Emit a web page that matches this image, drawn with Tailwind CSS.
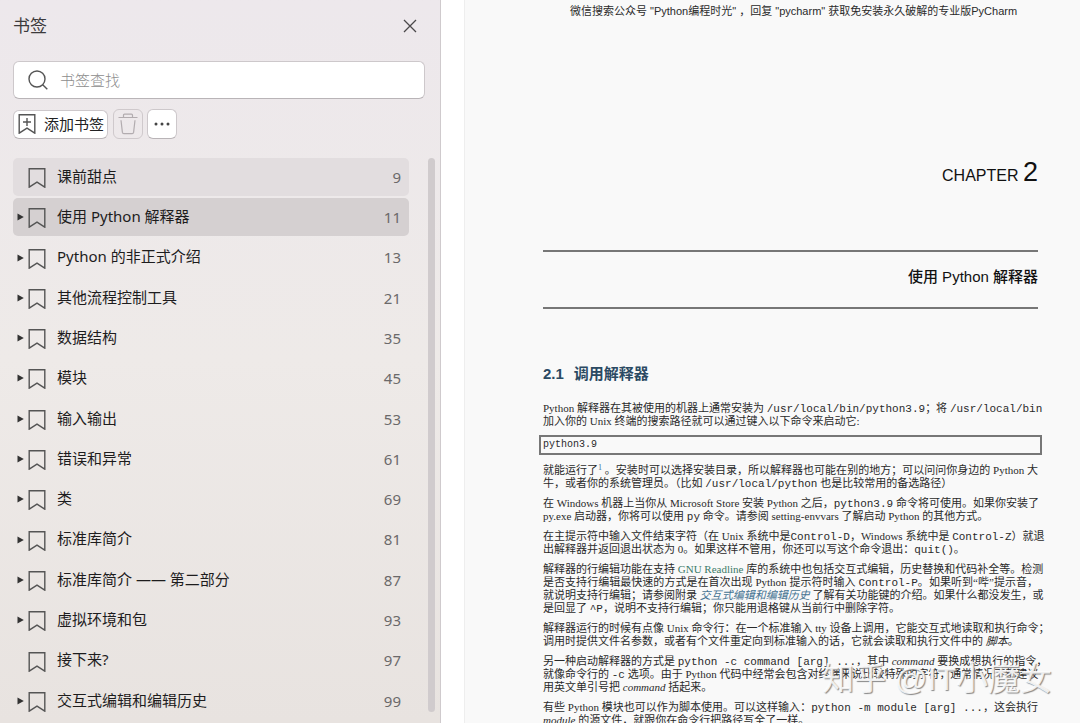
<!DOCTYPE html>
<html lang="zh-CN">

<head>
  <meta charset="UTF-8">
  <meta name="viewport" content="width=device-width, initial-scale=1">
  <title>使用 Python 解释器</title>
  <script src="https://cdn.jsdelivr.net/npm/@tailwindcss/browser@4"></script>
</head>

<body class="flex h-screen overflow-hidden bg-white font-['Noto_Sans','Noto_Sans_CJK_SC',sans-serif]">
  <!-- Bookmark panel -->
  <aside class="flex w-[441px] shrink-0 flex-col border-r border-[#cfcacd] bg-linear-to-b from-[#ede8ec] via-[#eeeae8] to-[#e8e3e0] pt-3 pb-[3px]">
    <header class="flex h-7 items-center justify-between pr-5 pl-[13px]">
      <h2 class="text-[17px] text-[#3c3a3c]">书签</h2>
      <button type="button" aria-label="关闭" class="grid size-5 place-items-center text-[#4a484a]">
        <svg class="size-4" viewBox="0 0 16 16" fill="none" stroke="currentColor" stroke-width="1.3"><path d="M2 2l12 12M14 2L2 14" /></svg>
      </button>
    </header>

    <label class="mt-[21px] mr-[15px] ml-[13px] flex h-[38px] items-center gap-3 rounded-md border border-[#cdc8cb] border-b-[#b9b4b7] bg-white pl-3.5">
      <svg class="size-5 shrink-0 text-[#555]" viewBox="0 0 20 20" fill="none" stroke="currentColor" stroke-width="1.4"><circle cx="9" cy="9" r="8" /><path d="M14.7 14.7l4.6 4.6" /></svg>
      <input type="text" aria-label="书签查找" placeholder="书签查找" class="min-w-0 flex-1 bg-transparent text-[15px] font-light outline-none placeholder:text-[#8d8d8d]">
    </label>

    <div class="mt-2.5 ml-[13px] flex h-[30px] items-center gap-1">
      <button type="button" class="mr-px flex h-[29px] items-center gap-2 rounded-md border border-[#cdc8cb] border-b-[#b9b4b7] bg-white pr-[3px] pl-1 text-[15px] text-[#222]">
        <svg class="h-5 w-[18px] text-[#555]" viewBox="0 0 18 20" fill="none" stroke="currentColor" stroke-width="1.4"><path d="M1.2.8h15.6v18.4L9 14.2l-7.8 5zM9 4v8M5 8h8" /></svg>
        添加书签
      </button>
      <button type="button" aria-label="删除" class="grid h-[30px] w-[30px] place-items-center rounded-md border border-[#cfc9cc] text-[#b2acaf]">
        <svg class="h-[22px] w-5" viewBox="0 0 20 22" fill="none" stroke="currentColor" stroke-width="1.2"><path d="M.5 4.5h19M5.5 4.5V2.2q0-1 1-1h7q1 0 1 1v2.3M3 7.2l1.4 12.2q.2 1.2 1.4 1.2h8.4q1.2 0 1.4-1.2L17 7.2" /></svg>
      </button>
      <button type="button" aria-label="更多" class="grid h-[30px] w-[30px] place-items-center rounded-md border border-[#cdc8cb] border-b-[#b9b4b7] bg-white text-[#444]">
        <svg class="h-1 w-4" viewBox="0 0 16 4" fill="currentColor"><circle cx="2" cy="2" r="1.5" /><circle cx="8" cy="2" r="1.5" /><circle cx="14" cy="2" r="1.5" /></svg>
      </button>
    </div>

    <div class="mt-[19px] flex min-h-0 flex-1 justify-between pr-[5px] pl-[13px]">
      <ul id="bookmarks" class="mr-[19px] flex flex-1 flex-col justify-between"></ul>
      <div class="mb-2 w-[7px] rounded-full bg-[#d0cbcd]"></div>
    </div>
  </aside>

  <!-- Page -->
  <main class="relative ml-[23px] min-w-0 flex-1 border-l border-[#eeeeee] bg-[#f9f9f9] pr-[42px] pl-[78px] text-[#2a2a2a]">
    <p class="pt-1 pl-[27px] font-['Liberation_Sans','Noto_Sans_CJK_SC',sans-serif] text-[11px] leading-[14px] whitespace-nowrap">微信搜索公众号 "Python编程时光" ，回复 "pycharm" 获取免安装永久破解的专业版PyCharm</p>

    <div class="mt-[136px] text-right font-['Liberation_Sans','Noto_Sans_CJK_SC',sans-serif] text-[#111]">
      <p class="text-base leading-9">CHAPTER <span class="text-[27px] leading-9">2</span></p>
      <h1 class="mt-[56px] flex h-[59px] items-center justify-end border-y-2 border-[#777] pb-1 text-[15px] font-medium whitespace-pre">使用 Python 解释器</h1>
    </div>

    <h2 class="mt-[53px] font-['Liberation_Sans','Noto_Sans_CJK_SC',sans-serif] text-[15px] leading-6 font-bold text-[#2b4a63]">2.1<span class="ml-2.5">调用解释器</span></h2>

    <div class="mt-4 flex flex-col gap-[7px] font-['Liberation_Serif','Noto_Sans_CJK_SC',serif] text-[11px] leading-[13px] whitespace-nowrap [&_code]:font-['Liberation_Mono',monospace] [&_code]:text-[11px] [&_code]:leading-none [&_p>span]:block [&_p>span:not(:last-child)]:[text-align-last:justify]">
      <p>
        <span>Python 解释器在其被使用的机器上通常安装为 <code>/usr/local/bin/python3.9</code>；将 <code>/usr/local/bin</code></span>
        <span>加入你的 Unix 终端的搜索路径就可以通过键入以下命令来启动它:</span>
      </p>
      <pre class="-mx-1 mb-0.5 h-5 border-2 border-[#777] pl-0.5 font-['Liberation_Mono',monospace] text-[10px] leading-4">python3.9</pre>
      <p>
        <span>就能运行了<sup class="text-[8px] leading-none text-[#3f6f96]">1</sup> 。安装时可以选择安装目录，所以解释器也可能在别的地方；可以问问你身边的 Python 大</span>
        <span>牛，或者你的系统管理员。（比如 <code>/usr/local/python</code> 也是比较常用的备选路径）</span>
      </p>
      <p>
        <span>在 Windows 机器上当你从 Microsoft Store 安装 Python 之后，<code>python3.9</code> 命令将可使用。如果你安装了</span>
        <span>py.exe 启动器，你将可以使用 <code>py</code> 命令。请参阅 setting-envvars 了解启动 Python 的其他方式。</span>
      </p>
      <p>
        <span>在主提示符中输入文件结束字符（在 Unix 系统中是<code>Control-D</code>，Windows 系统中是 <code>Control-Z</code>）就退</span>
        <span>出解释器并返回退出状态为 0。如果这样不管用，你还可以写这个命令退出：<code>quit()</code>。</span>
      </p>
      <p>
        <span>解释器的行编辑功能在支持 <a href="#" class="text-[#3c7a68]">GNU Readline</a> 库的系统中也包括交互式编辑，历史替换和代码补全等。检测</span>
        <span>是否支持行编辑最快速的方式是在首次出现 Python 提示符时输入 <code>Control-P</code>。如果听到“哔”提示音，</span>
        <span>就说明支持行编辑；请参阅附录 <a href="#" class="text-[#457392] italic">交互式编辑和编辑历史</a> 了解有关功能键的介绍。如果什么都没发生，或</span>
        <span>是回显了 <code>^P</code>，说明不支持行编辑；你只能用退格键从当前行中删除字符。</span>
      </p>
      <p>
        <span>解释器运行的时候有点像 Unix 命令行：在一个标准输入 tty 设备上调用，它能交互式地读取和执行命令；</span>
        <span>调用时提供文件名参数，或者有个文件重定向到标准输入的话，它就会读取和执行文件中的 <em>脚本</em>。</span>
      </p>
      <p>
        <span>另一种启动解释器的方式是 <code>python -c command [arg] ...</code>，其中 <em>command</em> 要换成想执行的指令，</span>
        <span>就像命令行的 <code>-c</code> 选项。由于 Python 代码中经常会包含对终端来说比较特殊的字符，通常情况下都建议</span>
        <span>用英文单引号把 <em>command</em> 括起来。</span>
      </p>
      <p>
        <span>有些 Python 模块也可以作为脚本使用。可以这样输入：<code>python -m module [arg] ...</code>，这会执行</span>
        <span><em>module</em> 的源文件，就跟你在命令行把路径写全了一样。</span>
      </p>
    </div>

    <!-- Watermark -->
    <div class="absolute right-7 bottom-6 font-['Liberation_Sans','Noto_Sans_CJK_SC',sans-serif] text-[32px] leading-10 whitespace-nowrap text-white/85 [text-shadow:1px_1px_1px_#888]">知乎 @IT小魔女</div>
  </main>

  <template id="row">
    <li>
      <a href="#" class="flex h-[38px] items-center rounded-[5px] pr-2 pl-1 text-[15px] text-[#1d1c1d]">
        <svg class="arrow h-2 w-[7px] text-[#333]" viewBox="0 0 7 8" fill="currentColor"><path d="M.5.5L6.8 4 .5 7.5z" /></svg>
        <svg class="mt-0.5 ml-1 h-5 w-[18px] text-[#555]" viewBox="0 0 18 20" fill="none" stroke="currentColor" stroke-width="1.4"><path d="M1.2.8h15.6v18.4L9 14.2l-7.8 5z" /></svg>
        <span class="title ml-[11px] flex-1 pb-0.5"></span>
        <span class="page text-[#6b696a]"></span>
      </a>
    </li>
  </template>

  <script>
    const bookmarks = [
      ['课前甜点', 9, false],
      ['使用 Python 解释器', 11, true],
      ['Python 的非正式介绍', 13, true],
      ['其他流程控制工具', 21, true],
      ['数据结构', 35, true],
      ['模块', 45, true],
      ['输入输出', 53, true],
      ['错误和异常', 61, true],
      ['类', 69, true],
      ['标准库简介', 81, true],
      ['标准库简介 —— 第二部分', 87, true],
      ['虚拟环境和包', 93, true],
      ['接下来?', 97, false],
      ['交互式编辑和编辑历史', 99, true]
    ];
    const list = document.getElementById('bookmarks');
    const row = document.getElementById('row');

    bookmarks.forEach(([title, page, expandable], i) => {
      const item = row.content.cloneNode(true);
      item.querySelector('.title').textContent = title;
      item.querySelector('.page').textContent = page;
      if (!expandable) item.querySelector('.arrow').classList.add('invisible');
      // hovered and current rows
      if (i === 0) item.querySelector('a').classList.add('bg-[#e2dddf]');
      if (i === 1) item.querySelector('a').classList.add('bg-[#d5d0d1]');
      list.appendChild(item);
    });
  </script>
</body>

</html>
